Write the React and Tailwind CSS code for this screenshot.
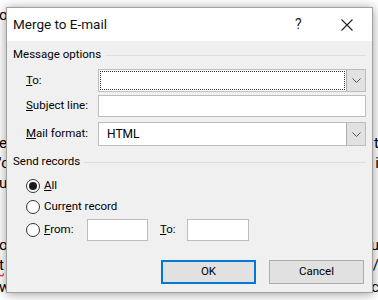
import React from "react";

const font = { fontFamily: 'Roboto, "Noto Sans", sans-serif' };

function Chevron() {
  return (
    <svg width="9" height="5" viewBox="0 0 9 5" fill="none">
      <path d="M0.5 0.5 L4.5 4.5 L8.5 0.5" stroke="#555" strokeWidth="1" />
    </svg>
  );
}

function Combo({ children, focus }) {
  return (
    <div className="flex flex-1 h-full border border-[#bdbdbd] bg-white">
      <div className="flex-1 flex items-center p-[1px]">
        {focus ? (
          <div className="w-full h-full border border-dotted border-[#333]" />
        ) : (
          <span className="pl-[7px] text-[12px] text-black">{children}</span>
        )}
      </div>
      <div className="w-[19px] h-full bg-[#e1e1e1] border-l border-[#adadad] flex items-center justify-center">
        <Chevron />
      </div>
    </div>
  );
}

function Radio({ checked }) {
  return (
    <div className="w-[14px] h-[14px] rounded-full border border-[#333] bg-white flex items-center justify-center shrink-0">
      {checked && <div className="w-[8px] h-[8px] rounded-full bg-[#1a1a1a]" />}
    </div>
  );
}

const lines = [
  { top: 6, l: "o", r: "" },
  { top: 134, l: "e", r: "t" },
  { top: 154, l: "'c", r: "i" },
  { top: 174, l: "u", r: "" },
  { top: 236, l: "o", r: "u" },
  { top: 256, l: "t", r: "/", red: true },
  { top: 278, l: "w", r: "c" },
];

export default function App() {
  return (
    <div className="relative w-[378px] h-[300px] bg-white overflow-hidden" style={font}>
      {lines.map((ln, i) => (
        <div
          key={i}
          className="absolute left-0 w-[378px] h-[18px] flex justify-between text-[15px] leading-[18px] text-black"
          style={{ top: ln.top }}
        >
          <span className={"-ml-[1px] " + (ln.red ? "underline decoration-wavy decoration-red-500" : "")}>{ln.l}</span>
          <span className="-mr-[1px]">{ln.r}</span>
        </div>
      ))}

      <div className="absolute left-[6px] top-[7px] w-[367px] h-[286px] border border-[#a0a0a0] bg-[#f0f0f0] shadow-[0_1px_10px_rgba(0,0,0,0.4)] flex flex-col text-[11.5px] text-black">
        {/* Title bar */}
        <div className="h-[33px] bg-white flex items-center pl-[6px] shrink-0">
          <span className="text-[13.5px] text-[#111] flex-1">Merge to E-mail</span>
          <span className="text-[14px] text-[#222] w-[12px] mr-[34px]">?</span>
          <svg width="12" height="12" viewBox="0 0 12 12" className="mr-[19px]">
            <path d="M0.5 0.5 L11.5 11.5 M11.5 0.5 L0.5 11.5" stroke="#222" strokeWidth="1.1" />
          </svg>
        </div>

        {/* Body */}
        <div className="flex flex-col pl-[6px] pr-[6px]">
          <div className="h-[16px] mt-[6px] flex items-center gap-[4px]">
            <span>Message options</span>
            <div className="flex-1 h-px bg-[#dedede]" />
          </div>

          <div className="flex items-center h-[23px] mt-[6px] pl-[13px]">
            <span className="w-[72px]"><u>T</u>o:</span>
            <Combo focus />
          </div>
          <div className="flex items-center h-[22px] mt-[3px] pl-[13px]">
            <span className="w-[72px]"><u>S</u>ubject line:</span>
            <div className="flex-1 h-full border border-[#bdbdbd] bg-white" />
          </div>
          <div className="flex items-center h-[24px] mt-[5px] pl-[13px]">
            <span className="w-[72px]"><u>M</u>ail format:</span>
            <Combo>HTML</Combo>
          </div>

          <div className="h-[16px] mt-[8px] flex items-center gap-[4px]">
            <span>Send records</span>
            <div className="flex-1 h-px bg-[#dedede]" />
          </div>

          <div className="flex items-center h-[18px] mt-[7px] pl-[13px] gap-[4px]">
            <Radio checked />
            <span><u>A</u>ll</span>
          </div>
          <div className="flex items-center h-[18px] mt-[3px] pl-[13px] gap-[4px]">
            <Radio />
            <span>Curr<u>e</u>nt record</span>
          </div>
          <div className="flex items-center h-[22px] mt-[3px] pl-[13px]">
            <Radio />
            <span className="ml-[4px] w-[43px]"><u>F</u>rom:</span>
            <div className="w-[61px] h-full border border-[#bdbdbd] bg-white" />
            <span className="ml-[12px] w-[27px]"><u>T</u>o:</span>
            <div className="w-[62px] h-full border border-[#bdbdbd] bg-white" />
          </div>

          <div className="flex justify-end gap-[13px] mt-[19px] pr-[2px]">
            <button className="w-[95px] h-[24px] bg-[#e1e1e1] border-2 border-[#0078d7] text-[11.5px]">OK</button>
            <button className="w-[95px] h-[24px] bg-[#e1e1e1] border border-[#adadad] text-[11.5px]">Cancel</button>
          </div>
        </div>
      </div>
    </div>
  );
}
